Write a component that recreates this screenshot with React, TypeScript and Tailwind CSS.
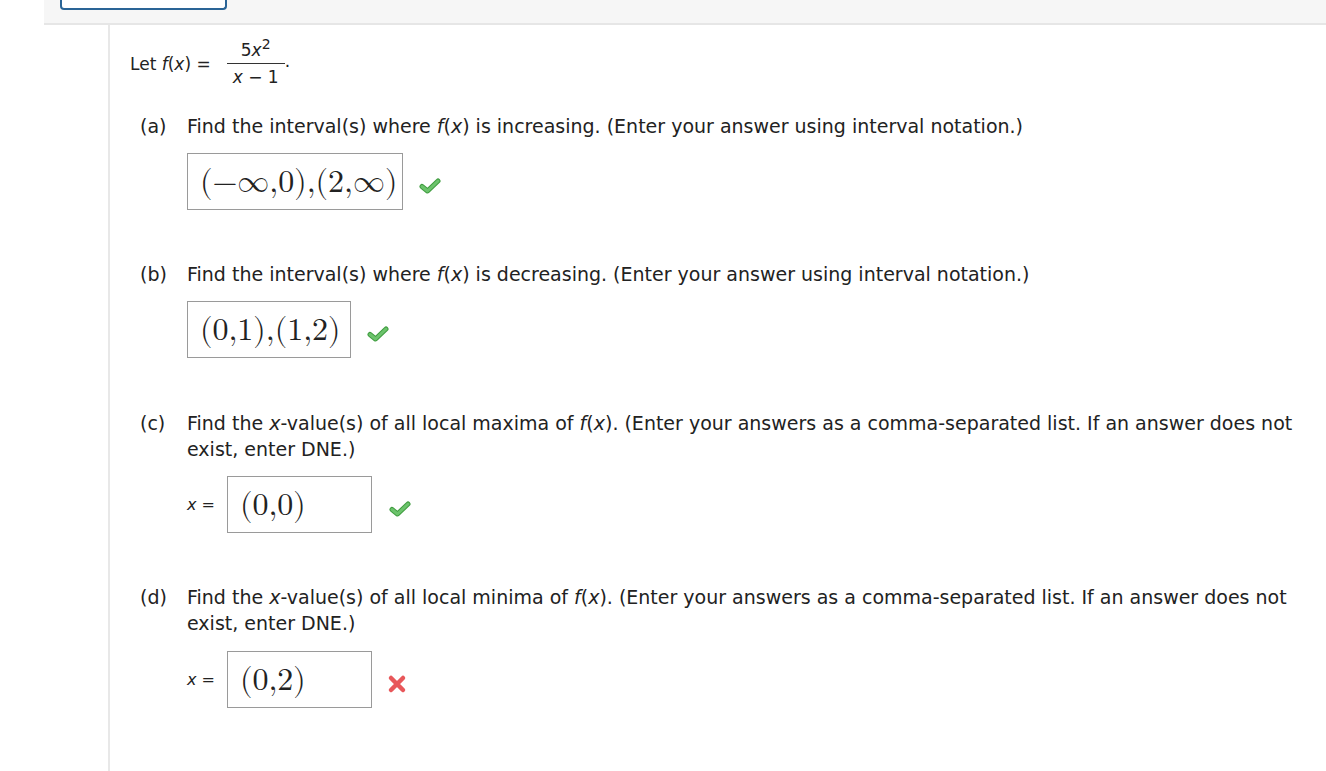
import React from 'react';

const sans = { fontFamily: 'Verdana, "DejaVu Sans", sans-serif' };
const serif = { fontFamily: '"Latin Modern Math", "Liberation Serif", serif' };

function Check() {
  return (
    <svg width="22" height="16" viewBox="0 0 22 16" className="mt-2 shrink-0">
      <path d="M3 8.5 L8.5 13 L19 3" fill="none" stroke="#3f9c3f" strokeWidth="5" strokeLinecap="round" strokeLinejoin="round" />
      <path d="M3 8.5 L8.5 13 L19 3" fill="none" stroke="#6cc36c" strokeWidth="3" strokeLinecap="round" strokeLinejoin="round" />
    </svg>
  );
}

function Cross() {
  return (
    <svg width="20" height="20" viewBox="0 0 20 20" className="mt-2 shrink-0">
      <path d="M4 4 L16 16 M16 4 L4 16" fill="none" stroke="#e8575a" strokeWidth="4.5" strokeLinecap="round" />
    </svg>
  );
}

function Answer({ text, width }: { text: string; width: string }) {
  return (
    <div
      className={`${width} h-[57px] border border-[#9a9a9a] bg-white flex items-center pl-[12px] text-[32px] text-[#222] leading-none`}
      style={serif}
    >
      {text}
    </div>
  );
}

function Part({
  label,
  children,
}: {
  label: string;
  children: React.ReactNode;
}) {
  return (
    <div className="flex">
      <div className="w-[47px] shrink-0">{label}</div>
      <div className="flex-1">{children}</div>
    </div>
  );
}

export default function App() {
  return (
    <div className="min-h-screen bg-white text-[#222] text-[19px] leading-[26px]" style={sans}>
      {/* top toolbar */}
      <div className="flex">
        <div className="w-[44px] shrink-0 bg-white" />
        <div className="flex-1 h-[25px] bg-[#f6f6f6] border-b-2 border-[#e6e6e6] pl-[16px]">
          <div className="w-[167px] h-[10px] border-2 border-t-0 border-[#2a6496] rounded-b-[4px] bg-white" />
        </div>
      </div>

      <div className="flex">
        <div className="w-[108px] shrink-0" />
        <div className="border-l-2 border-[#e8e8e8] min-h-[746px] flex-1 pl-[20px] pt-[12px]">
          {/* f(x) definition */}
          <div className="flex items-center h-[54px] text-[17px]">
            <span>
              Let <i>f</i>(<i>x</i>) =
            </span>
            <span className="inline-flex flex-col items-center ml-[16px] text-[17px] leading-[21px]">
              <span className="px-[2px]">
                5<i>x</i>
                <sup className="text-[14px]">2</sup>
              </span>
              <span className="w-[58px] h-[1.5px] bg-[#333] mt-[2px] mb-[3px]" />
              <span>
                <i>x</i> − 1
              </span>
            </span>
            <span className="-mt-[6px]">.</span>
          </div>

          <div className="pl-[10px] mt-[22px]">
            <Part label="(a)">
              <div>
                Find the interval(s) where <i>f</i>(<i>x</i>) is increasing. (Enter your answer using interval notation.)
              </div>
              <div className="flex items-center gap-[16px] mt-[14px]">
                <Answer text="(−∞,0),(2,∞)" width="w-[216px]" />
                <Check />
              </div>
            </Part>

            <div className="mt-[51px]">
              <Part label="(b)">
                <div>
                  Find the interval(s) where <i>f</i>(<i>x</i>) is decreasing. (Enter your answer using interval notation.)
                </div>
                <div className="flex items-center gap-[16px] mt-[14px]">
                  <Answer text="(0,1),(1,2)" width="w-[164px]" />
                  <Check />
                </div>
              </Part>
            </div>

            <div className="mt-[52px]">
              <Part label="(c)">
                <div className="pr-[20px]">
                  Find the <i>x</i>-value(s) of all local maxima of <i>f</i>(<i>x</i>). (Enter your answers as a comma-separated list. If an answer does not exist, enter DNE.)
                </div>
                <div className="flex items-center mt-[14px]">
                  <span className="text-[16px] w-[40px]">
                    <i>x</i> =
                  </span>
                  <Answer text="(0,0)" width="w-[145px]" />
                  <div className="ml-[17px]">
                    <Check />
                  </div>
                </div>
              </Part>
            </div>

            <div className="mt-[51px]">
              <Part label="(d)">
                <div className="pr-[20px]">
                  Find the <i>x</i>-value(s) of all local minima of <i>f</i>(<i>x</i>). (Enter your answers as a comma-separated list. If an answer does not exist, enter DNE.)
                </div>
                <div className="flex items-center mt-[15px]">
                  <span className="text-[16px] w-[40px]">
                    <i>x</i> =
                  </span>
                  <Answer text="(0,2)" width="w-[145px]" />
                  <div className="ml-[15px]">
                    <Cross />
                  </div>
                </div>
              </Part>
            </div>
          </div>
        </div>
      </div>
    </div>
  );
}
